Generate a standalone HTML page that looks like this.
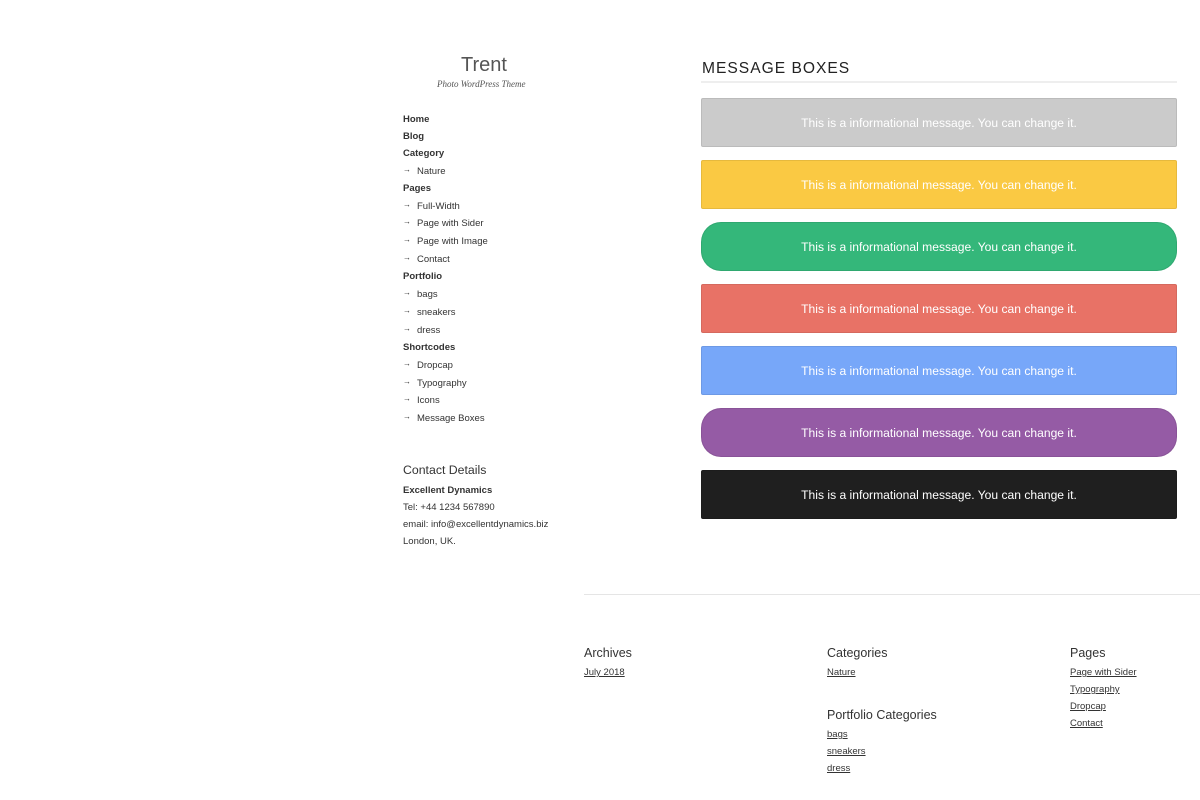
<!DOCTYPE html>
<html><head><style>
body{margin:0;width:1200px;height:800px;position:relative;background:#fff;font-family:"Liberation Sans",Arial,sans-serif;color:#333;overflow:hidden}
.a{position:absolute;white-space:nowrap}
.m{left:403px;font-size:9.5px;color:#333;line-height:12px;margin-top:1px}
.b{font-weight:bold}
.s:before{content:"→";font-size:8px;position:absolute;left:0;top:-2px}
.s{padding-left:14px}
.box{position:absolute;left:701px;width:474px;height:47px;border:1px solid rgba(0,0,0,.08);color:#fff;font-size:12.1px;text-align:center;line-height:49px;border-radius:2px}
.h{font-size:12.5px;color:#333;margin-top:1px}
.l{font-size:9.5px;color:#333;text-decoration:underline;margin-top:1px}
</style></head><body>
<div class="a" style="left:461px;top:54px;font-size:20px;color:#555">Trent</div>
<div class="a" style="left:437px;top:79px;font-size:9px;font-style:italic;font-family:'Liberation Serif',serif;color:#555">Photo WordPress Theme</div>
<div class="a m b" style="top:113px">Home</div>
<div class="a m b" style="top:130px">Blog</div>
<div class="a m b" style="top:147px">Category</div>
<div class="a m s" style="top:165px">Nature</div>
<div class="a m b" style="top:182px">Pages</div>
<div class="a m s" style="top:200px">Full-Width</div>
<div class="a m s" style="top:217px">Page with Sider</div>
<div class="a m s" style="top:235px">Page with Image</div>
<div class="a m s" style="top:253px">Contact</div>
<div class="a m b" style="top:270px">Portfolio</div>
<div class="a m s" style="top:288px">bags</div>
<div class="a m s" style="top:306px">sneakers</div>
<div class="a m s" style="top:324px">dress</div>
<div class="a m b" style="top:341px">Shortcodes</div>
<div class="a m s" style="top:359px">Dropcap</div>
<div class="a m s" style="top:377px">Typography</div>
<div class="a m s" style="top:394px">Icons</div>
<div class="a m s" style="top:412px">Message Boxes</div>
<div class="a" style="left:403px;top:463px;font-size:12.3px">Contact Details</div>
<div class="a m b" style="top:484px">Excellent Dynamics</div>
<div class="a m" style="top:501px">Tel: +44 1234 567890</div>
<div class="a m" style="top:518px">email: info@excellentdynamics.biz</div>
<div class="a m" style="top:535px">London, UK.</div>

<div class="a" style="left:702px;top:60px;font-size:15.6px;letter-spacing:1px;color:#222">MESSAGE BOXES</div>
<div class="a" style="left:701px;top:81px;width:476px;height:2px;background:#eee"></div>
<div class="box" style="top:98px;background:#cbcbcb">This is a informational message. You can change it.</div>
<div class="box" style="top:160px;background:#fac943">This is a informational message. You can change it.</div>
<div class="box" style="top:222px;background:#34b77a;border-radius:20px">This is a informational message. You can change it.</div>
<div class="box" style="top:284px;background:#e87266">This is a informational message. You can change it.</div>
<div class="box" style="top:346px;background:#77a7f9">This is a informational message. You can change it.</div>
<div class="box" style="top:408px;background:#955ba5;border-radius:20px">This is a informational message. You can change it.</div>
<div class="box" style="top:470px;background:#1f1f1f">This is a informational message. You can change it.</div>

<div class="a" style="left:584px;top:594px;width:616px;height:1px;background:#e5e5e5"></div>
<div class="a h" style="left:584px;top:645px">Archives</div>
<div class="a l" style="left:584px;top:666px">July 2018</div>
<div class="a h" style="left:827px;top:645px">Categories</div>
<div class="a l" style="left:827px;top:666px">Nature</div>
<div class="a h" style="left:827px;top:707px">Portfolio Categories</div>
<div class="a l" style="left:827px;top:728px">bags</div>
<div class="a l" style="left:827px;top:745px">sneakers</div>
<div class="a l" style="left:827px;top:762px">dress</div>
<div class="a h" style="left:1070px;top:645px">Pages</div>
<div class="a l" style="left:1070px;top:666px">Page with Sider</div>
<div class="a l" style="left:1070px;top:683px">Typography</div>
<div class="a l" style="left:1070px;top:700px">Dropcap</div>
<div class="a l" style="left:1070px;top:717px">Contact</div>
</body></html>
